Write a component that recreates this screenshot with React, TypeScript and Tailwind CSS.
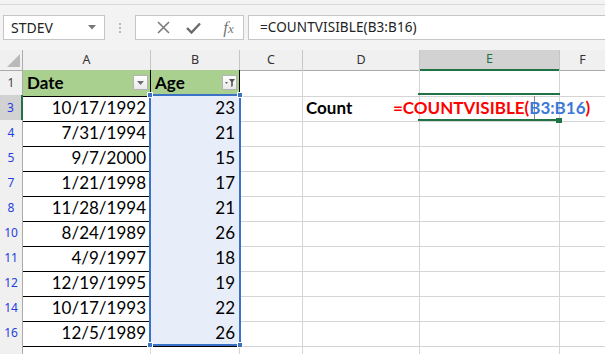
import React from "react";

const rows: [string, string, string][] = [
  ["3", "10/17/1992", "23"],
  ["4", "7/31/1994", "21"],
  ["5", "9/7/2000", "15"],
  ["7", "1/21/1998", "17"],
  ["8", "11/28/1994", "21"],
  ["10", "8/24/1989", "26"],
  ["11", "4/9/1997", "18"],
  ["12", "12/19/1995", "19"],
  ["14", "10/17/1993", "22"],
  ["16", "12/5/1989", "26"],
];

const GRID = "grid grid-cols-[23px_128px_89px_63px_117px_140px_45px]";
const ui = { fontFamily: '"Noto Sans", "Open Sans", sans-serif' };
const cellFont = { fontFamily: 'Lato, "Open Sans", sans-serif' };

function FilterBtn({ filtered }: { filtered?: boolean }) {
  return (
    <div className="w-[15px] h-[15px] border border-[#b3b3b3] bg-gradient-to-b from-white to-[#e9e9e9] flex items-center justify-center">
      {filtered ? (
        <svg width="12" height="11" viewBox="0 0 12 11">
          <path d="M1 5 L4 5 L2.5 7 Z" fill="#666" />
          <path d="M5 2 L11 2 L8.8 5 L8.8 9 L7.2 10 L7.2 5 Z" fill="#555" />
        </svg>
      ) : (
        <svg width="9" height="6" viewBox="0 0 9 6">
          <path d="M1 1 L8 1 L4.5 5 Z" fill="#6d6d6d" />
        </svg>
      )}
    </div>
  );
}

export default function App() {
  return (
    <div className="w-[605px] h-[354px] overflow-hidden bg-[#f3f3f3] flex flex-col" style={ui}>
      {/* top strip */}
      <div className="h-[5px] shrink-0 bg-[#f3f3f3] border-b border-[#d9d9d9]" />
      {/* formula bar */}
      <div className="h-[45px] shrink-0 flex items-start pt-[10px] pl-[3px]">
        <div className="w-[102px] h-[25px] bg-white border border-[#c6c6c6] flex items-center justify-between pl-[7px] pr-[8px] text-[14px] text-[#222]">
          <span>STDEV</span>
          <svg width="8" height="5" viewBox="0 0 8 5">
            <path d="M0 0 L8 0 L4 4.5 Z" fill="#777" />
          </svg>
        </div>
        <div className="w-[30px] h-[25px] flex flex-col items-center justify-center gap-[2px]">
          <div className="w-[2px] h-[2px] bg-[#b8b8b8]" />
          <div className="w-[2px] h-[2px] bg-[#b8b8b8]" />
          <div className="w-[2px] h-[2px] bg-[#b8b8b8]" />
        </div>
        <div className="w-[109px] h-[25px] bg-white border border-[#c6c6c6] flex items-center">
          <div className="w-[36px] flex justify-end pr-[2px]">
            <svg width="13" height="13" viewBox="0 0 13 13">
              <path d="M1 1 L12 12 M12 1 L1 12" stroke="#7a7a7a" strokeWidth="1.6" />
            </svg>
          </div>
          <div className="w-[38px] flex justify-center pl-[4px]">
            <svg width="15" height="12" viewBox="0 0 15 12">
              <path d="M1 6 L5.5 10.5 L14 1.5" stroke="#6a6a6a" strokeWidth="2.4" fill="none" />
            </svg>
          </div>
          <div className="flex-1 flex justify-center pl-[4px]">
            <span className="text-[17px] italic text-[#777] leading-none" style={{ fontFamily: '"Liberation Serif", serif' }}>
              f<span className="text-[13px]">x</span>
            </span>
          </div>
        </div>
        <div className="ml-[4px] flex-1 h-[25px] bg-white border border-[#c6c6c6] border-r-0 flex items-center pl-[11px] text-[13.5px] tracking-[0.1px] text-[#222]">
          =COUNTVISIBLE(B3:B16)
        </div>
      </div>
      {/* sheet */}
      <div className="relative flex-1 bg-white">
        {/* column headers */}
        <div className={`${GRID} h-[20px] text-[12.5px] text-[#333]`}>
          <div className="relative bg-[#f0f0f0] border-r border-b border-[#ababab]">
            <svg className="absolute left-[7px] top-[4px]" width="13" height="13" viewBox="0 0 13 13">
              <path d="M13 0 L13 13 L0 13 Z" fill="#b9b9b9" />
            </svg>
          </div>
          {["A", "B", "C", "D"].map((c) => (
            <div key={c} className="bg-[#f0f0f0] border-r border-b border-[#c6c6c6] border-b-[#ababab] flex items-center justify-center">
              {c}
            </div>
          ))}
          <div className="bg-[#d2d2d2] border-r border-[#c6c6c6] border-b-2 border-b-[#217346] flex items-center justify-center text-[#217346]">
            E
          </div>
          <div className="bg-[#f0f0f0] border-b border-[#ababab] flex items-center justify-center">F</div>
        </div>
        {/* row 1 */}
        <div className={`${GRID} h-[25px]`} style={cellFont}>
          <div className="bg-[#f0f0f0] border-r border-[#ababab] border-b border-b-[#d4d4d4] flex items-center justify-center text-[12px] text-[#444]" style={ui}>
            1
          </div>
          <div className="bg-[#a9d08e] border-r border-b border-black flex items-center justify-between pl-[4px] pr-[2px] text-[17px] font-bold text-black">
            <span>Date</span>
            <FilterBtn />
          </div>
          <div className="bg-[#a9d08e] border-r border-b border-black flex items-center justify-between pl-[4px] pr-[2px] text-[17px] font-bold text-black">
            <span>Age</span>
            <FilterBtn filtered />
          </div>
          <div className="border-r border-b border-[#d4d4d4]" />
          <div className="border-r border-b border-[#d4d4d4]" />
          <div className="border-r border-b border-[#d4d4d4]" />
          <div className="border-b border-[#d4d4d4]" />
        </div>
        {rows.map(([n, d, a], i) => (
          <div key={n} className={`${GRID} h-[25px]`} style={cellFont}>
            <div
              className={`${i === 0 ? "bg-[#d2d2d2] border-r-2 border-r-[#217346]" : "bg-[#f0f0f0] border-r border-r-[#ababab]"} border-b border-b-[#d4d4d4] flex items-center justify-center text-[12px] text-[#1f3fe0]`}
              style={ui}
            >
              {n}
            </div>
            <div className="border-r border-b border-black flex items-center justify-end pr-[4px] text-[17px] text-black">{d}</div>
            <div className="bg-[#e8eef9] border-r border-b border-black flex items-center justify-end pr-[4px] text-[17px] text-black">{a}</div>
            <div className="border-r border-b border-[#d4d4d4]" />
            <div className="border-r border-b border-[#d4d4d4] flex items-center pl-[3px] text-[17px] font-bold text-black">
              {i === 0 ? "Count" : ""}
            </div>
            <div className="border-r border-b border-[#d4d4d4]" />
            <div className="border-b border-[#d4d4d4]" />
          </div>
        ))}
        {/* partial last row */}
        <div className={`${GRID} h-[25px]`}>
          <div className="bg-[#f0f0f0] border-r border-[#ababab]" />
          <div className="border-r border-[#d4d4d4]" />
          <div className="border-r border-[#d4d4d4]" />
          <div className="border-r border-[#d4d4d4]" />
          <div className="border-r border-[#d4d4d4]" />
          <div className="border-r border-[#d4d4d4]" />
          <div />
        </div>

        {/* selection B3:B16 */}
        <div className="absolute left-[149px] top-[44px] w-[92px] h-[252px] border-2 border-[#3a72c8] pointer-events-none" />
        <div className="absolute left-[147px] top-[42px] w-[6px] h-[6px] bg-[#3a72c8] border border-white" />
        <div className="absolute left-[237px] top-[42px] w-[6px] h-[6px] bg-[#3a72c8] border border-white" />
        <div className="absolute left-[147px] top-[292px] w-[6px] h-[6px] bg-[#3a72c8] border border-white" />
        <div className="absolute left-[237px] top-[292px] w-[6px] h-[6px] bg-[#3a72c8] border border-white" />

        {/* active cell E3 in edit mode */}
        <div className="absolute left-[418px] top-[43px] w-[142px] h-[2px] bg-[#217346]" />
        <div className="absolute left-[418px] top-[69px] w-[138px] h-[2px] bg-[#217346]" />
        <div className="absolute left-[556px] top-[68px] w-[6px] h-[5px] bg-[#217346]" />
        <div className="absolute left-[534px] top-[46px] w-[1px] h-[23px] bg-[#8a8a8a]" />
        <div
          className="absolute left-[393px] top-[45px] h-[25px] flex items-center text-[17px] font-bold text-[#ff0000] whitespace-nowrap"
          style={cellFont}
        >
          =COUNTVISIBLE(<span className="text-[#3c78d8]">B3:B16</span>)
        </div>
      </div>
    </div>
  );
}
